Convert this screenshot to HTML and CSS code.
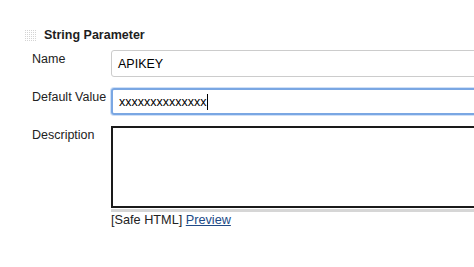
FILE: index.html
```html
<!DOCTYPE html>
<html lang="en">
<head>
    <meta charset="UTF-8">
    <title>String Parameter</title>
    <link rel="stylesheet" href="styles.css">
</head>
<body>
    <div class="param">
        <div class="param-head">
            <span class="grip"></span>
            <span class="param-title">String Parameter</span>
        </div>
        <div class="rows">
            <label class="lbl">Name</label>
            <div class="field">APIKEY</div>

            <label class="lbl">Default Value</label>
            <div class="field focused">xxxxxxxxxxxxxx<span class="caret"></span></div>

            <label class="lbl">Description</label>
            <div class="desc">
                <div class="area"></div>
                <div class="handle"></div>
                <div class="help">[Safe HTML] <a href="#">Preview</a></div>
            </div>
        </div>
    </div>
</body>
</html>
```

FILE: styles.css
```css
* {
    margin: 0;
    padding: 0;
    box-sizing: border-box;
}

body {
    font-family: "Liberation Sans", Arial, sans-serif;
    font-size: 12.5px;
    color: #222;
    background: #fff;
    overflow: hidden;
    width: 474px;
    height: 267px;
}

.param {
    padding: 27px 0 0 24px;
}

.param-head {
    display: flex;
    align-items: center;
    gap: 8px;
    height: 15px;
}

.grip {
    width: 12px;
    height: 12px;
    background-color: #d4d4d4;
    background-image:
        linear-gradient(90deg, #fff 1px, transparent 1px),
        linear-gradient(#fff 1px, transparent 1px);
    background-size: 2px 2px;
}

.param-title {
    font-weight: bold;
    color: #1e1e1e;
}

.rows {
    display: grid;
    grid-template-columns: 79px 420px;
    row-gap: 11px;
    margin-top: 8px;
    padding-left: 8px;
}

.lbl {
    padding-top: 2px;
}

.field {
    height: 27px;
    border: 1px solid #ccc;
    border-radius: 3px;
    padding: 0 6px;
    color: #000;
    display: flex;
    align-items: center;
}

.field.focused {
    border: 2px solid #7aa7e3;
    box-shadow: 0 0 0 1px #cfe0f7;
}

.caret {
    display: inline-block;
    width: 1px;
    height: 16px;
    background: #000;
}

.area {
    height: 82px;
    border: 2px solid #1a1a1a;
    border-right: none;
}

.handle {
    height: 3px;
    margin-top: 1px;
    background: #d6d6d6;
}

.help {
    margin-top: 1px;
    font-size: 12.7px;
}

.help a {
    color: #204a87;
}
```
